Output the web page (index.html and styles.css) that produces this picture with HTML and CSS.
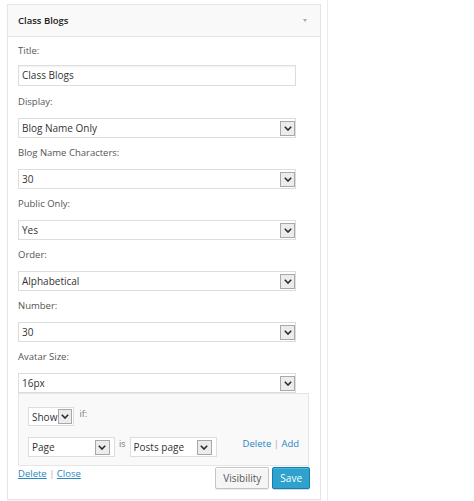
FILE: index.html
```html
<!DOCTYPE html>
<html>
<head>
<meta charset="utf-8">
<title>Class Blogs widget</title>
<link rel="stylesheet" href="styles.css">
</head>
<body>
<div class="page">
  <div class="widget">
    <div class="widget-top">
      <span class="widget-title">Class Blogs</span>
      <span class="toggle"></span>
    </div>
    <div class="widget-body">
      <div class="field">
        <label class="label">Title:</label>
        <div class="input">Class Blogs</div>
      </div>
      <div class="field">
        <label class="label">Display:</label>
        <div class="select"><span>Blog Name Only</span><span class="arrow"><svg width="8" height="5" viewBox="0 0 8 5"><path d="M0.8 0.8 L4 4 L7.2 0.8" fill="none" stroke="#2a2a2a" stroke-width="1.6"/></svg></span></div>
      </div>
      <div class="field">
        <label class="label">Blog Name Characters:</label>
        <div class="select"><span>30</span><span class="arrow"><svg width="8" height="5" viewBox="0 0 8 5"><path d="M0.8 0.8 L4 4 L7.2 0.8" fill="none" stroke="#2a2a2a" stroke-width="1.6"/></svg></span></div>
      </div>
      <div class="field">
        <label class="label">Public Only:</label>
        <div class="select"><span>Yes</span><span class="arrow"><svg width="8" height="5" viewBox="0 0 8 5"><path d="M0.8 0.8 L4 4 L7.2 0.8" fill="none" stroke="#2a2a2a" stroke-width="1.6"/></svg></span></div>
      </div>
      <div class="field">
        <label class="label">Order:</label>
        <div class="select"><span>Alphabetical</span><span class="arrow"><svg width="8" height="5" viewBox="0 0 8 5"><path d="M0.8 0.8 L4 4 L7.2 0.8" fill="none" stroke="#2a2a2a" stroke-width="1.6"/></svg></span></div>
      </div>
      <div class="field">
        <label class="label">Number:</label>
        <div class="select"><span>30</span><span class="arrow"><svg width="8" height="5" viewBox="0 0 8 5"><path d="M0.8 0.8 L4 4 L7.2 0.8" fill="none" stroke="#2a2a2a" stroke-width="1.6"/></svg></span></div>
      </div>
      <div class="field last">
        <label class="label">Avatar Size:</label>
        <div class="select"><span>16px</span><span class="arrow"><svg width="8" height="5" viewBox="0 0 8 5"><path d="M0.8 0.8 L4 4 L7.2 0.8" fill="none" stroke="#2a2a2a" stroke-width="1.6"/></svg></span></div>
      </div>

      <div class="visibility">
        <div class="vis-row first">
          <div class="select small show"><span>Show</span><span class="arrow"><svg width="8" height="5" viewBox="0 0 8 5"><path d="M0.8 0.8 L4 4 L7.2 0.8" fill="none" stroke="#2a2a2a" stroke-width="1.6"/></svg></span></div>
          <span class="muted">if:</span>
        </div>
        <div class="vis-row">
          <div class="select small cond"><span>Page</span><span class="arrow"><svg width="8" height="5" viewBox="0 0 8 5"><path d="M0.8 0.8 L4 4 L7.2 0.8" fill="none" stroke="#2a2a2a" stroke-width="1.6"/></svg></span></div>
          <span class="muted">is</span>
          <div class="select small cond"><span>Posts page</span><span class="arrow"><svg width="8" height="5" viewBox="0 0 8 5"><path d="M0.8 0.8 L4 4 L7.2 0.8" fill="none" stroke="#2a2a2a" stroke-width="1.6"/></svg></span></div>
          <span class="row-links"><a class="link">Delete</a> <span class="sep">|</span> <a class="link">Add</a></span>
        </div>
      </div>

      <div class="actions">
        <span class="control-links"><a class="link u">Delete</a> <span class="sep">|</span> <a class="link u">Close</a></span>
        <span class="buttons">
          <span class="btn">Visibility</span>
          <span class="btn primary">Save</span>
        </span>
      </div>
    </div>
  </div>
  <div class="side-line"></div>
</div>
</body>
</html>
```
FILE: styles.css
```css
html, body {
  margin: 0;
  background: #fff;
}
body {
  font-family: "Open Sans", "Liberation Sans", sans-serif;
  color: #444;
}
.page {
  display: flex;
  height: 501px;
}
.widget {
  margin: 4px 0 0 7px;
  width: 314px;
  box-sizing: border-box;
  border: 1px solid #e5e5e5;
  box-shadow: 0 1px 1px rgba(0,0,0,0.04);
  align-self: flex-start;
  background: #fff;
}
.side-line {
  margin-left: 6px;
  width: 1px;
  background: #ececec;
}
.widget-top {
  height: 31px;
  background: #f9f9f9;
  border-bottom: 1px solid #e5e5e5;
  display: flex;
  align-items: center;
  justify-content: space-between;
  padding: 0 13px 0 10px;
}
.widget-title {
  font-size: 9.5px;
  font-weight: 600;
  color: #222;
}
.toggle {
  width: 0;
  height: 0;
  border-left: 2.5px solid transparent;
  border-right: 2.5px solid transparent;
  border-top: 3px solid #aaa;
}
.widget-body {
  padding: 7px 10px 10px 10px;
}
.field {
  margin-bottom: 8px;
}
.field.last {
  margin-bottom: 0;
}
.label {
  display: block;
  font-size: 9.5px;
  line-height: 13px;
  color: #555;
  margin-bottom: 10px;
}
.field:first-child .label {
  margin-bottom: 8px;
}
.field:first-child {
  margin-bottom: 9px;
}
.input {
  width: 278px;
  height: 21px;
  box-sizing: border-box;
  border: 1px solid #ddd;
  box-shadow: inset 0 1px 2px rgba(0,0,0,0.06);
  padding-left: 3px;
  font-size: 10px;
  line-height: 19px;
  color: #333;
}
.select {
  width: 278px;
  height: 20px;
  box-sizing: border-box;
  border: 1px solid #ddd;
  background: #fff;
  display: flex;
  align-items: center;
  justify-content: space-between;
  padding: 0 0 0 3px;
  font-size: 10px;
  color: #333;
}
.arrow {
  width: 15px;
  height: 15px;
  box-sizing: border-box;
  border: 1px solid #a8a8a8;
  background: #ececec;
  display: flex;
  align-items: center;
  justify-content: center;
}
.visibility {
  width: 291px;
  box-sizing: border-box;
  border: 1px solid #e5e5e5;
  background: #f9f9f9;
  padding: 13px 9px 8px 9px;
}
.vis-row {
  display: flex;
  align-items: flex-start;
}
.vis-row.first {
  margin-bottom: 11px;
}
.select.small {
  width: auto;
  height: 19px;
  padding: 0 1px 0 3px;
}
.select.show .arrow {
  margin-left: 1px;
  width: 14px;
}
.vis-row .select.cond {
  height: 20px;
  width: 87px;
  padding-right: 4px;
}
.muted {
  font-size: 9px;
  color: #777;
  line-height: 13px;
  margin: 0 4px;
}
.vis-row.first .muted {
  margin-left: 5px;
}
.row-links {
  margin-left: 26px;
  font-size: 9.5px;
  line-height: 13px;
}
.link {
  color: #2a86c0;
  cursor: pointer;
}
.link.u {
  text-decoration: underline;
}
.sep {
  color: #aaa;
}
.actions {
  width: 292px;
  display: flex;
  justify-content: space-between;
  align-items: flex-start;
}
.control-links {
  font-size: 9.5px;
  line-height: 13px;
  margin-top: 1px;
}
.buttons {
  display: flex;
  gap: 3px;
  margin-top: 1px;
}
.btn {
  display: inline-block;
  height: 22px;
  box-sizing: border-box;
  padding: 0 7px;
  border: 1px solid #c4c4c4;
  border-radius: 2px;
  background: #f5f5f5;
  box-shadow: inset 0 1px 0 #fff, 0 1px 0 rgba(0,0,0,0.08);
  font-size: 10px;
  line-height: 20px;
  color: #555;
}
.btn.primary {
  background: #2ea2cc;
  border-color: #0f7fb0;
  color: #fff;
  box-shadow: inset 0 1px 0 rgba(120,200,230,0.5), 0 1px 0 rgba(0,0,0,0.15);
}
```
